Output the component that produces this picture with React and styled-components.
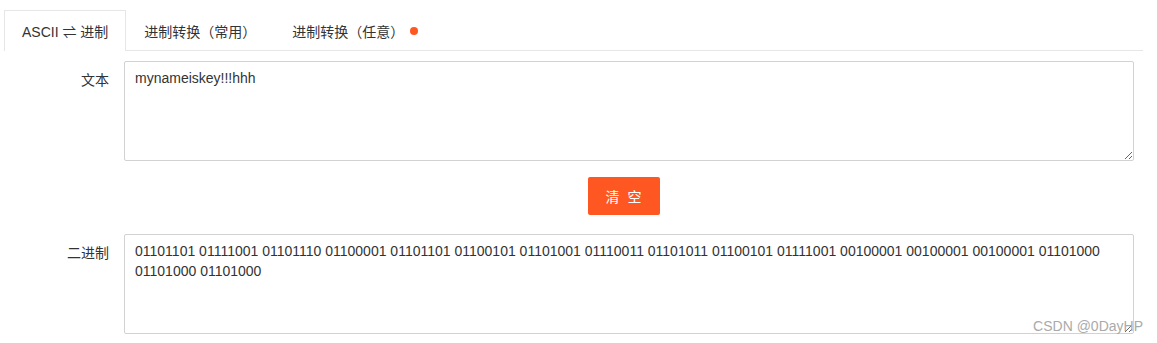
import React, { useState } from 'react'
import styled, { createGlobalStyle } from 'styled-components'

const GlobalStyle = createGlobalStyle`
  body {
    margin: 0;
    background: #fff;
    font-family: "Liberation Sans", "Noto Sans CJK SC", sans-serif;
    font-size: 14px;
    color: #333;
  }
`

const toBinary = (text) =>
  text
    .split('')
    .map((c) => c.charCodeAt(0).toString(2).padStart(8, '0'))
    .join(' ')

const App = () => {
  const [text, setText] = useState('mynameiskey!!!hhh')
  const tabs = ['ASCII ⇌ 进制', '进制转换（常用）', '进制转换（任意）']

  return (
    <Page>
      <GlobalStyle />
      <TabBar>
        {tabs.map((t, i) => (
          <Tab key={t} $active={i === 0}>
            {t}
            {i === 2 && <Dot />}
          </Tab>
        ))}
      </TabBar>
      <Form>
        <Row>
          <Label>文本</Label>
          <Area value={text} onChange={(e) => setText(e.target.value)} />
        </Row>
        <ButtonRow>
          <Button onClick={() => setText('')}>清 空</Button>
        </ButtonRow>
        <Row>
          <Label>二进制</Label>
          <AreaWrap>
            <Area readOnly value={toBinary(text)} />
            <Watermark>CSDN @0DayHP</Watermark>
          </AreaWrap>
        </Row>
      </Form>
    </Page>
  )
}

const Page = styled.div`
  padding: 10px 14px 0 4px;
`

const TabBar = styled.ul`
  display: flex;
  margin: 0;
  padding: 0;
  list-style: none;
  height: 40px;
  border-bottom: 1px solid #e6e6e6;
`

const Tab = styled.li`
  display: flex;
  align-items: center;
  box-sizing: border-box;
  height: ${(p) => (p.$active ? '41px' : '40px')};
  margin-bottom: ${(p) => (p.$active ? '-1px' : '0')};
  padding: 0 ${(p) => (p.$active ? '17px' : '17px')};
  border: 1px solid ${(p) => (p.$active ? '#e6e6e6' : 'transparent')};
  border-bottom: none;
  background: ${(p) => (p.$active ? '#fff' : 'transparent')};
  color: #333;
  white-space: nowrap;
  cursor: pointer;
`

const Dot = styled.span`
  display: inline-block;
  width: 8px;
  height: 8px;
  border-radius: 50%;
  background: #ff5722;
  margin-left: 6px;
`

const Form = styled.div`
  padding-top: 10px;
`

const Row = styled.div`
  display: grid;
  grid-template-columns: 120px 1fr;
  margin-right: 9px;
`

const Label = styled.label`
  padding: 9px 15px 9px 0;
  line-height: 20px;
  text-align: right;
  color: #333;
`

const AreaWrap = styled.div`
  position: relative;
`

const Area = styled.textarea`
  display: block;
  width: 100%;
  height: 100px;
  box-sizing: border-box;
  padding: 6px 10px;
  border: 1px solid #d2d2d2;
  border-radius: 2px;
  font-family: "Liberation Sans", "Noto Sans CJK SC", sans-serif;
  font-size: 14px;
  line-height: 20px;
  color: #333;
  outline: none;
  resize: vertical;
`

const ButtonRow = styled.div`
  display: flex;
  justify-content: center;
  padding: 16px 0 19px 100px;
`

const Button = styled.button`
  height: 38px;
  width: 72px;
  border: none;
  border-radius: 2px;
  background: #ff5722;
  color: #fff;
  font-family: "Liberation Sans", "Noto Sans CJK SC", sans-serif;
  font-size: 14px;
  word-spacing: 4px;
  cursor: pointer;
`

const Watermark = styled.span`
  position: absolute;
  right: -9px;
  bottom: 0;
  font-size: 14px;
  color: #aaa;
  white-space: nowrap;
  pointer-events: none;
`

export default App
